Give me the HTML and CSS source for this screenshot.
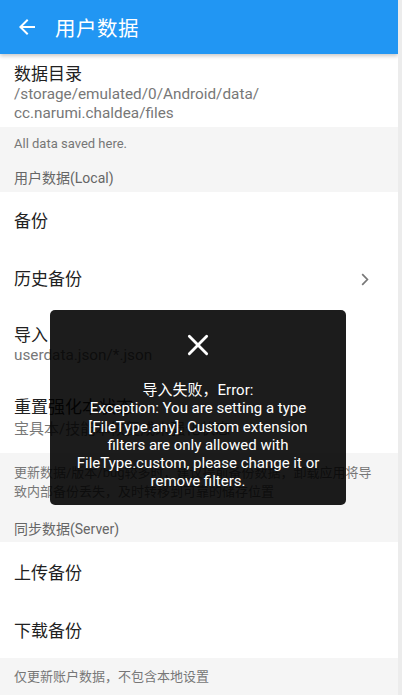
FILE: index.html
```html
<!DOCTYPE html>
<html lang="zh">
<head>
<meta charset="utf-8">
<title>用户数据</title>
<link rel="stylesheet" href="styles.css">
</head>
<body>
<div class="screen">
  <div class="app">
    <header class="appbar">
      <svg class="back" viewBox="0 0 24 24" width="24" height="24"><path d="M20 11H7.83l5.59-5.59L12 4l-8 8 8 8 1.41-1.41L7.83 13H20v-2z" fill="#fff"/></svg>
      <div class="appbar-title">用户数据</div>
    </header>
    <div class="content">
      <section class="tiles">
        <div class="tile tile-dir">
          <div class="tile-title">数据目录</div>
          <div class="tile-sub path">/storage/emulated/0/Android/data/<br>cc.narumi.chaldea/files</div>
        </div>
      </section>
      <div class="footer first">All data saved here.</div>
      <div class="header">用户数据(Local)</div>
      <section class="tiles">
        <div class="tile single"><div class="tile-title">备份</div></div>
        <div class="tile single row">
          <div class="tile-title">历史备份</div>
          <svg class="chev" viewBox="0 0 8 13" width="8" height="13"><path d="M1.2 1.2 6.4 6.5 1.2 11.8" fill="none" stroke="#777" stroke-width="1.7"/></svg>
        </div>
        <div class="tile double">
          <div class="tile-title">导入</div>
          <div class="tile-sub">userdata.json/*.json</div>
        </div>
        <div class="tile double tall">
          <div class="tile-title">重置强化本状态</div>
          <div class="tile-sub cjk">宝具本/技能本恢复成未强化状态</div>
        </div>
      </section>
      <div class="footer note">更新数据/版本/bug较多时，建议提前备份数据，卸载应用将导致内部备份丢失，及时转移到可靠的储存位置</div>
      <div class="header second">同步数据(Server)</div>
      <section class="tiles">
        <div class="tile single low"><div class="tile-title">上传备份</div></div>
        <div class="tile single low"><div class="tile-title">下载备份</div></div>
      </section>
      <div class="footer last">仅更新账户数据，不包含本地设置</div>
    </div>
    <div class="toast">
      <svg class="toast-icon" viewBox="0 0 24 24" width="26" height="26"><path d="M4 4 20 20M20 4 4 20" stroke="#fff" stroke-width="2.6" stroke-linecap="round"/></svg>
      <div class="toast-text">导入失败，Error:<br>Exception: You are setting a type [FileType.any]. Custom extension filters are only allowed with FileType.custom, please change it or remove filters.</div>
    </div>
  </div>
  <div class="scrollstrip"></div>
</div>
</body>
</html>
```

FILE: styles.css
```css
* { box-sizing: border-box; }
html, body { margin: 0; padding: 0; }
body {
  width: 402px;
  height: 695px;
  overflow: hidden;
  background: #f5f5f5;
  font-family: Roboto, "Noto Sans CJK SC", "Noto Sans", sans-serif;
  color: #222;
}
.screen { display: flex; height: 695px; }
.app { flex: 1; position: relative; background: #f5f5f5; overflow: hidden; }
.scrollstrip { width: 4px; background: #ececec; }

.appbar {
  height: 54px;
  background: #2196f3;
  display: flex;
  align-items: center;
  padding-left: 15px;
  box-shadow: 0 2px 4px rgba(0,0,0,0.22);
  position: relative;
  z-index: 2;
}
.back { flex: none; }
.appbar-title {
  margin-left: 16px;
  color: #fff;
  font-size: 20.5px;
  letter-spacing: 0.5px;
  font-family: "Noto Sans CJK SC", Roboto, sans-serif;
}

.tiles { background: #fff; }
.tile { padding: 0 14px; }
.tile-title {
  font-size: 17px;
  line-height: 22px;
  color: #212121;
  font-family: Roboto, "Noto Sans CJK SC", sans-serif;
}
.tile-sub {
  font-size: 15.3px;
  line-height: 18px;
  color: #777;
}
.tile-sub.cjk { font-size: 15px; line-height: 22px; }
.tile-dir { padding-top: 9px; padding-bottom: 5px; }
.tile-dir .tile-sub { line-height: 18.5px; }
.single { height: 58px; display: flex; align-items: center; }
.single.low { padding-top: 3px; }
.single.row { justify-content: space-between; padding-right: 29px; }
.double { padding-top: 16px; padding-bottom: 16px; }
.double.tall { padding-bottom: 13px; }

.footer {
  font-size: 13px;
  line-height: 18px;
  color: #777;
  padding: 0 14px;
}
.footer.first { padding-top: 8px; padding-bottom: 7px; }
.footer.note { padding-top: 10px; padding-bottom: 8px; line-height: 19px; }
.footer.last { padding-top: 10px; }
.header {
  font-size: 14px;
  line-height: 18px;
  color: #666;
  padding: 9px 14px 5px;
}
.header.second { padding-top: 11px; padding-bottom: 4px; }

.toast {
  position: absolute;
  left: 50px;
  top: 310px;
  width: 296px;
  height: 195px;
  background: rgba(0,0,0,0.89);
  border-radius: 5px;
  display: flex;
  flex-direction: column;
  align-items: center;
  padding: 22px 18px 0;
}
.toast-icon { flex: none; }
.toast-text {
  margin-top: 23px;
  max-width: 258px;
  color: #fff;
  font-size: 15px;
  line-height: 18.3px;
  text-align: center;
}
```
